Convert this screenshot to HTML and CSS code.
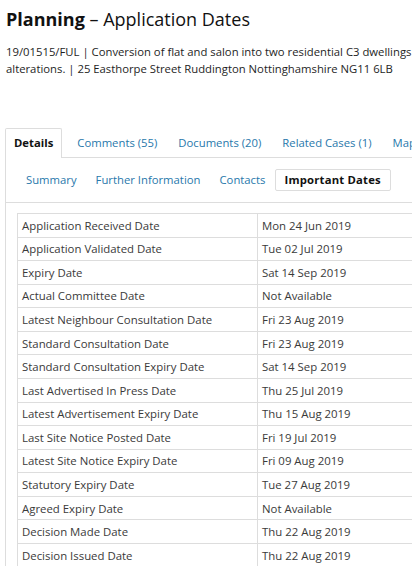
FILE: index.html
```html
<!DOCTYPE html>
<html>
<head>
<meta charset="utf-8">
<link rel="stylesheet" href="styles.css">
</head>
<body>
<div class="page">
  <h1 class="title"><b>Planning</b> – Application Dates</h1>
  <p class="summary">19/01515/FUL | Conversion of flat and salon into two residential C3 dwellings<br>alterations. | 25 Easthorpe Street Ruddington Nottinghamshire NG11 6LB</p>
  <div class="tabs">
    <ul class="tab-list">
      <li class="tab active">Details</li>
      <li class="tab">Comments (55)</li>
      <li class="tab">Documents (20)</li>
      <li class="tab">Related Cases (1)</li>
      <li class="tab">Map</li>
    </ul>
    <div class="panel">
      <ul class="subtabs">
        <li class="subtab">Summary</li>
        <li class="subtab">Further Information</li>
        <li class="subtab">Contacts</li>
        <li class="subtab current">Important Dates</li>
      </ul>
      <div class="dates">
        <table class="date-table">
          <tr><th>Application Received Date</th><td>Mon 24 Jun 2019</td></tr>
          <tr><th>Application Validated Date</th><td>Tue 02 Jul 2019</td></tr>
          <tr><th>Expiry Date</th><td>Sat 14 Sep 2019</td></tr>
          <tr><th>Actual Committee Date</th><td>Not Available</td></tr>
          <tr><th>Latest Neighbour Consultation Date</th><td>Fri 23 Aug 2019</td></tr>
          <tr><th>Standard Consultation Date</th><td>Fri 23 Aug 2019</td></tr>
          <tr><th>Standard Consultation Expiry Date</th><td>Sat 14 Sep 2019</td></tr>
          <tr><th>Last Advertised In Press Date</th><td>Thu 25 Jul 2019</td></tr>
          <tr><th>Latest Advertisement Expiry Date</th><td>Thu 15 Aug 2019</td></tr>
          <tr><th>Last Site Notice Posted Date</th><td>Fri 19 Jul 2019</td></tr>
          <tr><th>Latest Site Notice Expiry Date</th><td>Fri 09 Aug 2019</td></tr>
          <tr><th>Statutory Expiry Date</th><td>Tue 27 Aug 2019</td></tr>
          <tr><th>Agreed Expiry Date</th><td>Not Available</td></tr>
          <tr><th>Decision Made Date</th><td>Thu 22 Aug 2019</td></tr>
          <tr><th>Decision Issued Date</th><td>Thu 22 Aug 2019</td></tr>
        </table>
      </div>
    </div>
  </div>
</div>
</body>
</html>
```
FILE: styles.css
```css
html, body {
  margin: 0;
  padding: 0;
  background: #fff;
  overflow: hidden;
}
body {
  font-family: "Open Sans", "Liberation Sans", sans-serif;
  color: #222;
}
.page {
  width: 560px;
  padding: 7px 0 0 6px;
}
.title {
  margin: 0;
  font-size: 18px;
  font-weight: normal;
  line-height: 24px;
  color: #111;
}
.title b {
  font-weight: bold;
}
.summary {
  margin: 12px 0 0 0;
  font-size: 11.3px;
  line-height: 17px;
  color: #1e1e1e;
  white-space: nowrap;
}
.tabs {
  margin: 51px 0 0 -1px;
  font-size: 11.3px;
}
.tab-list {
  list-style: none;
  margin: 0;
  padding: 0;
  display: flex;
  border-bottom: 1px solid #ddd;
  height: 29px;
}
.tab {
  padding: 0 8px;
  line-height: 28px;
  color: #2878ab;
  border: 1px solid transparent;
  border-bottom: none;
  margin-right: 3px;
  white-space: nowrap;
}
.tab.active {
  color: #111;
  font-weight: bold;
  border-color: #ddd;
  background: #fff;
  height: 29px;
  border-radius: 2px 2px 0 0;
  margin-right: 6px;
}
.panel {
  border-left: 1px solid #ddd;
}
.subtabs {
  list-style: none;
  margin: 0;
  padding: 11px 0 11px 20px;
  display: flex;
  gap: 19px;
  align-items: center;
  border-bottom: 1px solid #ddd;
}
.subtab {
  color: #2878ab;
  line-height: 20px;
  white-space: nowrap;
}
.subtab.current {
  color: #111;
  font-weight: bold;
  letter-spacing: 0.2px;
  border: 1px solid #ddd;
  border-radius: 2px;
  padding: 0 9px 0 8px;
  margin-left: -9px;
}
.dates {
  padding: 10px 0 0 11px;
}
.date-table {
  border-collapse: collapse;
  font-size: 11.4px;
  color: #3a3a3a;
}
.date-table th,
.date-table td {
  border: 1px solid #ddd;
  text-align: left;
  font-weight: normal;
  height: 22.57px;
  padding: 0 4px;
  white-space: nowrap;
}
.date-table th {
  width: 231px;
}
.date-table td {
  width: 240px;
}
```
